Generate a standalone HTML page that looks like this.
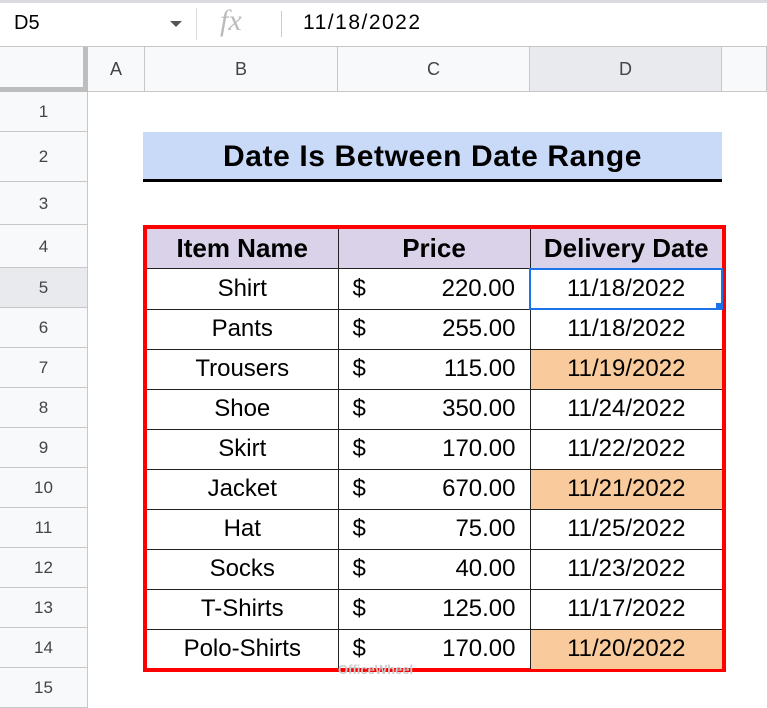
<!DOCTYPE html>
<html><head><style>
*{margin:0;padding:0;box-sizing:border-box}
body{width:767px;height:708px;overflow:hidden;background:#fff;font-family:"Liberation Sans",Arial,sans-serif;position:relative}
.a{position:absolute}
.topbar{left:0;top:0;width:767px;height:47px;border-top:3px solid #dadce0;border-bottom:1px solid #c7c7c7;background:#fff}
.ch{top:47px;height:45px;background:#f8f9fa;border-right:1px solid #c7c7c7;border-bottom:1px solid #c7c7c7;color:#444;font-size:18px;text-align:center;line-height:45px}
.rh{left:0;width:88px;background:#f8f9fa;border-right:1px solid #c7c7c7;border-bottom:1px solid #c7c7c7;color:#444;font-size:17px;text-align:center}
.c{font-size:24px;color:#000;border-right:1.5px solid #222;border-bottom:1.5px solid #222;text-align:center}
</style></head><body>
<div class="a topbar"></div>
<div class="a" style="left:14px;top:12px;font-size:20px;color:#000">D5</div>
<div class="a" style="left:170px;top:21px;width:0;height:0;border-left:6px solid transparent;border-right:6px solid transparent;border-top:6px solid #555"></div>
<div class="a" style="left:196px;top:8px;width:1px;height:32px;background:#dadce0"></div>
<div class="a" style="left:220px;top:4px;font-size:30px;color:#bbb;font-style:italic;font-family:'Liberation Serif',serif">fx</div>
<div class="a" style="left:281px;top:11px;width:1px;height:26px;background:#ccc"></div>
<div class="a" style="left:303px;top:11px;font-size:21px;color:#000;letter-spacing:1.5px">11/18/2022</div>
<div class="a" style="left:0;top:47px;width:88px;height:45px;background:#f8f9fa;border-right:5px solid #bdbdbd;border-bottom:5px solid #bdbdbd"></div>
<div class="a ch" style="left:88px;width:57px">A</div>
<div class="a ch" style="left:145px;width:193px">B</div>
<div class="a ch" style="left:338px;width:192px">C</div>
<div class="a ch" style="left:530px;width:192px;background:#e8eaed">D</div>
<div class="a ch" style="left:722px;width:45px"></div>
<div class="a rh" style="top:92px;height:40px;line-height:40px">1</div>
<div class="a rh" style="top:132px;height:50px;line-height:50px">2</div>
<div class="a rh" style="top:182px;height:43px;line-height:43px">3</div>
<div class="a rh" style="top:225px;height:43px;line-height:43px">4</div>
<div class="a rh" style="top:268px;height:40px;line-height:40px;background:#e8eaed">5</div>
<div class="a rh" style="top:308px;height:40px;line-height:40px">6</div>
<div class="a rh" style="top:348px;height:40px;line-height:40px">7</div>
<div class="a rh" style="top:388px;height:40px;line-height:40px">8</div>
<div class="a rh" style="top:428px;height:40px;line-height:40px">9</div>
<div class="a rh" style="top:468px;height:40px;line-height:40px">10</div>
<div class="a rh" style="top:508px;height:40px;line-height:40px">11</div>
<div class="a rh" style="top:548px;height:40px;line-height:40px">12</div>
<div class="a rh" style="top:588px;height:40px;line-height:40px">13</div>
<div class="a rh" style="top:628px;height:40px;line-height:40px">14</div>
<div class="a rh" style="top:668px;height:40px;line-height:40px">15</div>

<div class="a" style="left:143px;top:132px;width:579px;height:50px;background:#c9daf8;border-bottom:3px solid #000;text-align:center;line-height:50px;font-size:30px;font-weight:bold;letter-spacing:0.6px">Date Is Between Date Range</div>

<div class="a" style="left:143px;top:225px;width:583px;height:447px;border:4px solid #f00"></div>
<div class="a" style="left:147px;top:229px;width:575px">
<table style="border-collapse:collapse;table-layout:fixed;width:575px">
<colgroup><col style="width:191px"><col style="width:192px"><col style="width:192px"></colgroup>
<tr style="height:39px;background:#d9d2e9;font-weight:bold"><td class="c" style="font-size:26px">Item Name</td><td class="c" style="font-size:26px">Price</td><td class="c" style="border-right:none;font-size:26px;white-space:nowrap">Delivery Date</td></tr>
</table></div>
<div class="a" style="left:147px;top:268px;width:575px">
<table style="border-collapse:collapse;table-layout:fixed;width:575px">
<colgroup><col style="width:191px"><col style="width:192px"><col style="width:192px"></colgroup>
<tr style="height:40px"><td class="c">Shirt</td><td class="c"><span style="float:left;padding-left:14px">$</span><span style="float:right;padding-right:14px">220.00</span></td><td class="c" style="border:2px solid #1a73e8">11/18/2022</td></tr>
<tr style="height:40px"><td class="c">Pants</td><td class="c"><span style="float:left;padding-left:14px">$</span><span style="float:right;padding-right:14px">255.00</span></td><td class="c" style="border-right:none">11/18/2022</td></tr>
<tr style="height:40px"><td class="c">Trousers</td><td class="c"><span style="float:left;padding-left:14px">$</span><span style="float:right;padding-right:14px">115.00</span></td><td class="c" style="border-right:none;background:#f9cb9c">11/19/2022</td></tr>
<tr style="height:40px"><td class="c">Shoe</td><td class="c"><span style="float:left;padding-left:14px">$</span><span style="float:right;padding-right:14px">350.00</span></td><td class="c" style="border-right:none">11/24/2022</td></tr>
<tr style="height:40px"><td class="c">Skirt</td><td class="c"><span style="float:left;padding-left:14px">$</span><span style="float:right;padding-right:14px">170.00</span></td><td class="c" style="border-right:none">11/22/2022</td></tr>
<tr style="height:40px"><td class="c">Jacket</td><td class="c"><span style="float:left;padding-left:14px">$</span><span style="float:right;padding-right:14px">670.00</span></td><td class="c" style="border-right:none;background:#f9cb9c">11/21/2022</td></tr>
<tr style="height:40px"><td class="c">Hat</td><td class="c"><span style="float:left;padding-left:14px">$</span><span style="float:right;padding-right:14px">75.00</span></td><td class="c" style="border-right:none">11/25/2022</td></tr>
<tr style="height:40px"><td class="c">Socks</td><td class="c"><span style="float:left;padding-left:14px">$</span><span style="float:right;padding-right:14px">40.00</span></td><td class="c" style="border-right:none">11/23/2022</td></tr>
<tr style="height:40px"><td class="c">T-Shirts</td><td class="c"><span style="float:left;padding-left:14px">$</span><span style="float:right;padding-right:14px">125.00</span></td><td class="c" style="border-right:none">11/17/2022</td></tr>
<tr style="height:40px"><td class="c" style="border-bottom:none">Polo-Shirts</td><td class="c" style="border-bottom:none"><span style="float:left;padding-left:14px">$</span><span style="float:right;padding-right:14px">170.00</span></td><td class="c" style="border:none;background:#f9cb9c">11/20/2022</td></tr>
</table></div>
<div class="a" style="left:716px;top:303px;width:7px;height:7px;background:#1a73e8"></div>
<div class="a" style="left:338px;top:662px;font-size:13px;color:#ccc;font-weight:bold">OfficeWheel</div>
</body></html>
